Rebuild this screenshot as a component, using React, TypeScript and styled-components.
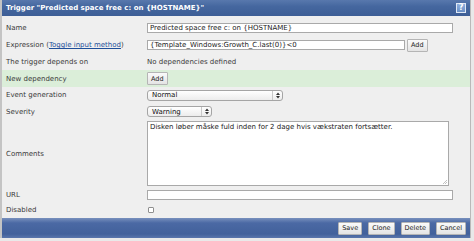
import React from "react";
import styled, { createGlobalStyle } from "styled-components";

const Global = createGlobalStyle`
  html, body { margin: 0; padding: 0; background: #e9e9e9; }
  body { font-family: "DejaVu Sans", Verdana, sans-serif; width: 474px; height: 241px; overflow: hidden; }
  * { box-sizing: border-box; }
`;

const Panel = styled.div`
  width: 471px;
  border-left: 2px solid #c4c4c4;
  border-right: 1px solid #b9b9b9;
  background: #efefef;
  display: flex;
  flex-direction: column;
`;

const Header = styled.div`
  height: 16px;
  background: linear-gradient(#5878ad, #45679f 40%, #3d5e96);
  display: flex;
  align-items: center;
  justify-content: space-between;
  padding: 0 4px 0 4px;
  color: #fff;
  font-weight: bold;
  font-size: 7px;
`;

const Help = styled.div`
  width: 10px;
  height: 10px;
  border: 1px solid #dfe8f5;
  background: linear-gradient(#8fb0de, #6a8fc6);
  color: #fff;
  font-weight: bold;
  font-size: 8px;
  line-height: 8px;
  text-align: center;
`;

const Body = styled.div`
  display: flex;
  flex-direction: column;
  padding-top: 2px;
`;

const Row = styled.div<{ $h: number; $green?: boolean }>`
  display: flex;
  align-items: center;
  height: ${(p) => p.$h}px;
  background: ${(p) => (p.$green ? "#dbeed9" : "transparent")};
  font-size: 7px;
  color: #3a3a3a;
`;

const Label = styled.div`
  width: 145px;
  padding-left: 4px;
  flex-shrink: 0;
`;

const Link = styled.span`
  color: #1f4f9a;
  text-decoration: underline;
`;

const Field = styled.div`
  display: flex;
  align-items: center;
  gap: 2px;
`;

const TextInput = styled.div<{ $w: number }>`
  width: ${(p) => p.$w}px;
  height: 10px;
  background: #fff;
  border: 1px solid #a9a9a9;
  font-size: 7px;
  line-height: 8px;
  padding-left: 2px;
  color: #222;
  white-space: nowrap;
  overflow: hidden;
`;

const Button = styled.div`
  height: 13px;
  padding: 0 3px;
  border: 1px solid #b5b5b5;
  border-radius: 1px;
  background: linear-gradient(#fafafa, #e4e4e4);
  font-size: 6.5px;
  color: #222;
  display: flex;
  align-items: center;
`;

const Select = styled.div<{ $w: number }>`
  width: ${(p) => p.$w}px;
  height: 11px;
  border: 1px solid #a5a5a5;
  border-radius: 3px;
  background: linear-gradient(#ffffff, #ececec);
  display: flex;
  align-items: center;
  justify-content: space-between;
  font-size: 7px;
  color: #111;
  padding-left: 4px;
`;

const Arrows = styled.div`
  width: 10px;
  height: 9px;
  border-left: 1px solid #c8c8c8;
  display: flex;
  align-items: center;
  justify-content: center;
`;

const TextArea = styled.div`
  width: 302px;
  height: 65px;
  background: #fff;
  border: 1px solid #a9a9a9;
  font-size: 7px;
  color: #222;
  padding: 1px 2px;
  position: relative;
`;

const Grip = styled.svg`
  position: absolute;
  right: 1px;
  bottom: 1px;
`;

const Check = styled.div`
  width: 6px;
  height: 6px;
  border: 1px solid #8f8f8f;
  border-radius: 1px;
  background: #fff;
  margin-left: 1px;
`;

const Footer = styled.div`
  height: 20px;
  margin-top: 1px;
  background: linear-gradient(#7890bd, #4b69a4 25%, #42619b 80%, #5a76ac);
  display: flex;
  align-items: center;
  justify-content: flex-end;
  gap: 6px;
  padding-right: 4px;
`;

const ArrowIcon = () => (
  <svg width="4" height="7" viewBox="0 0 4 7">
    <path d="M0 3 L2 0.5 L4 3 Z M0 4 L2 6.5 L4 4 Z" fill="#333" />
  </svg>
);

export default function App() {
  return (
    <>
      <Global />
      <Panel>
        <Header>
          <span>Trigger "Predicted space free c: on {"{HOSTNAME}"}"</span>
          <Help>?</Help>
        </Header>
        <Body>
          <Row $h={19}>
            <Label>Name</Label>
            <TextInput $w={306}>Predicted space free c: on {"{HOSTNAME}"}</TextInput>
          </Row>
          <Row $h={16}>
            <Label>
              Expression (<Link>Toggle input method</Link>)
            </Label>
            <Field>
              <TextInput $w={258}>{"{Template_Windows:Growth_C.last(0)}<0"}</TextInput>
              <Button>Add</Button>
            </Field>
          </Row>
          <Row $h={17}>
            <Label>The trigger depends on</Label>
            <span>No dependencies defined</span>
          </Row>
          <Row $h={17} $green>
            <Label>New dependency</Label>
            <Button>Add</Button>
          </Row>
          <Row $h={16}>
            <Label>Event generation</Label>
            <Select $w={136}>
              <span>Normal</span>
              <Arrows>
                <ArrowIcon />
              </Arrows>
            </Select>
          </Row>
          <Row $h={17}>
            <Label>Severity</Label>
            <Select $w={65}>
              <span>Warning</span>
              <Arrows>
                <ArrowIcon />
              </Arrows>
            </Select>
          </Row>
          <Row $h={67}>
            <Label>Comments</Label>
            <TextArea>
              Disken løber måske fuld inden for 2 dage hvis vækstraten fortsætter.
              <Grip width="5" height="5" viewBox="0 0 5 5">
                <path d="M1 5 L5 1 M3 5 L5 3" stroke="#999" strokeWidth="0.6" />
              </Grip>
            </TextArea>
          </Row>
          <Row $h={16}>
            <Label>URL</Label>
            <TextInput $w={306} />
          </Row>
          <Row $h={14}>
            <Label>Disabled</Label>
            <Check />
          </Row>
        </Body>
        <Footer>
          <Button>Save</Button>
          <Button>Clone</Button>
          <Button>Delete</Button>
          <Button>Cancel</Button>
        </Footer>
      </Panel>
    </>
  );
}
